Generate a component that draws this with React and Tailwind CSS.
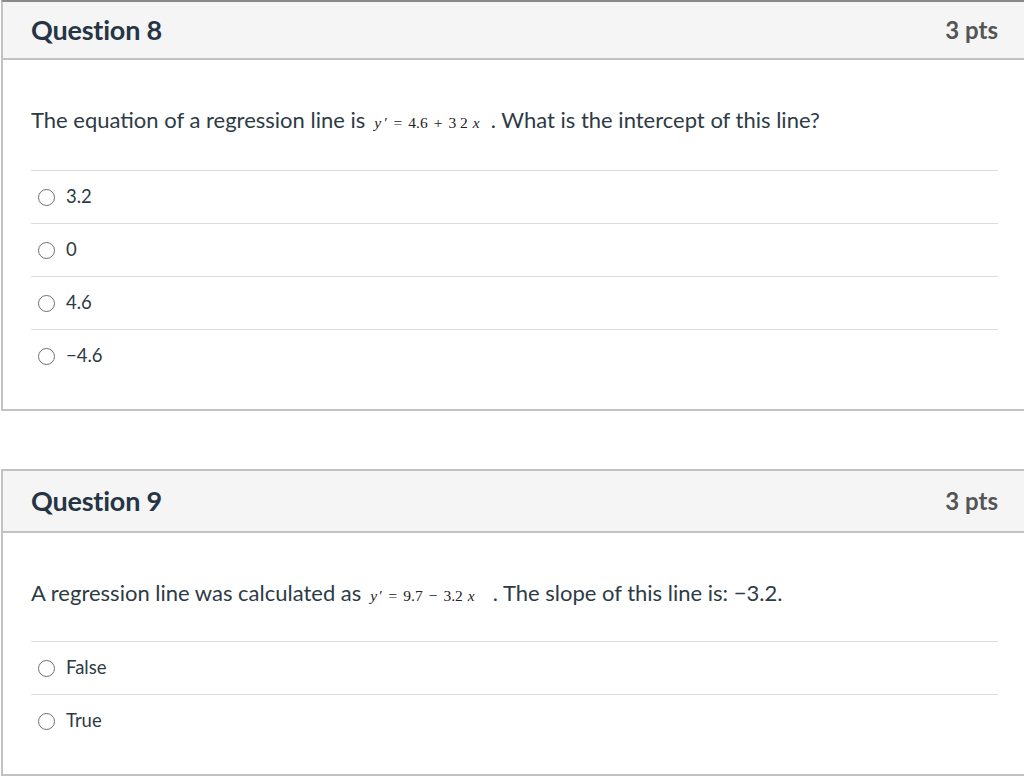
import React from "react";

function Radio({ label }) {
  return (
    <div className="flex items-center h-[53px] border-t border-[#dcdcdc]">
      <span className="ml-[7px] w-[17px] h-[17px] rounded-full border border-[#6f6f6f] bg-white shrink-0" />
      <span className="ml-[11px] text-[18.5px] text-[#2d3b45]">{label}</span>
    </div>
  );
}

function Card({ title, children, answers, className, headerH, textMb }) {
  return (
    <div className={"w-[1026px] ml-px border-2 border-[#c2c2c2] bg-white " + className}>
      <div className={"bg-[#f5f5f5] border-b-2 border-[#c2c2c2] flex items-center justify-between pl-[28px] pr-[27px] " + headerH}>
        <span className="text-[27px] font-bold text-[#253546] tracking-[-0.2px]">{title}</span>
        <span className="text-[24px] font-bold text-[#555555]">3 pts</span>
      </div>
      <div className="pl-[28px] pr-[27px] pt-[46px] pb-[27px]">
        <div className={"text-[22px] text-[#2d3b45] leading-[28px] " + textMb}>{children}</div>
        {answers.map((a) => (
          <Radio key={a} label={a} />
        ))}
      </div>
    </div>
  );
}

function M({ children, mr }) {
  return (
    <span className={"font-['Liberation_Serif',serif] text-[15.5px] text-[#222] ml-[9px] " + mr}>{children}</span>
  );
}

function Op({ children }) {
  return <span className="mx-[6px]">{children}</span>;
}

export default function App() {
  return (
    <div className="w-[1024px] h-[777px] overflow-hidden bg-white font-['Lato',sans-serif]">
      <Card
        title="Question 8"
        headerH="h-[58px]"
        textMb="mb-[33px]"
        className="border-t-[#8a8a8a]"
        answers={["3.2", "0", "4.6", "\u22124.6"]}
      >
        The equation of a regression line is
        <M mr="mr-[11px]">
          <i>y</i>
          <span className="ml-[3px]">′</span>
          <Op>=</Op>4.6<Op>+</Op>3<span className="text-white">.</span>2<i className="ml-[5px]">x</i>
        </M>
        . What is the intercept of this line?
      </Card>
      <Card
        title="Question 9"
        headerH="h-[62px]"
        textMb="mb-[31px]"
        className="mt-[58px]"
        answers={["False", "True"]}
      >
        A regression line was calculated as
        <M mr="mr-[18px]">
          <i>y</i>
          <span className="ml-[2px]">′</span>
          <Op>=</Op>9.7<Op>−</Op>3.2<i className="ml-[5px]">x</i>
        </M>
        . The slope of this line is: −3.2.
      </Card>
    </div>
  );
}
